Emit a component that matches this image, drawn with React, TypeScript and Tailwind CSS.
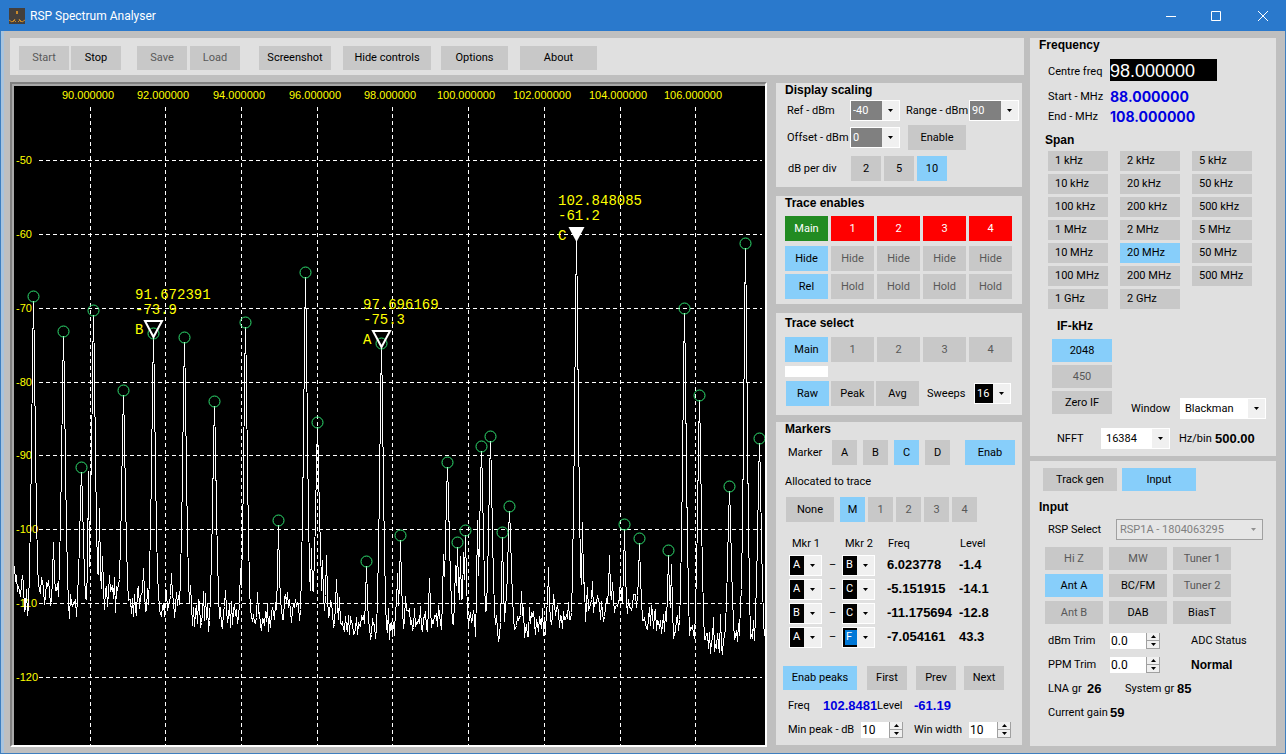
import React, { useState } from 'react';
import clsx from 'clsx';

const SPANS = [
    '1 kHz', '2 kHz', '5 kHz',
    '10 kHz', '20 kHz', '50 kHz',
    '100 kHz', '200 kHz', '500 kHz',
    '1 MHz', '2 MHz', '5 MHz',
    '10 MHz', '20 MHz', '50 MHz',
    '100 MHz', '200 MHz', '500 MHz',
    '1 GHz', '2 GHz',
];

const MARKER_ROWS = [
    { a: 'A', b: 'B', freq: '6.023778', level: '-1.4' },
    { a: 'A', b: 'C', freq: '-5.151915', level: '-14.1' },
    { a: 'B', b: 'C', freq: '-11.175694', level: '-12.8' },
    { a: 'A', b: 'F', freq: '-7.054161', level: '43.3' },
];

// Plot geometry, in plot pixels
const PLOT_W = 751;
const PLOT_H = 659;
const GRID_X = [76, 151, 227, 303, 378, 454, 530, 606, 681];
const GRID_Y = [74, 148, 222, 296, 369, 443, 517, 591];

// Detected peaks, circled on the plot
const PEAKS = [
    [19, 210], [49, 245], [67, 381], [79, 224], [109, 304], [139, 247], [170, 251], [200, 315],
    [231, 236], [264, 434], [291, 186], [303, 336], [352, 475], [367, 257], [386, 449], [433, 376],
    [443, 456], [451, 444], [467, 360], [476, 350], [488, 446], [495, 420], [610, 438], [625, 452],
    [654, 464], [670, 222], [685, 309], [715, 400], [731, 157], [745, 352],
];

const MINOR_PEAKS = [
    [0, 480], [39, 456], [74, 385], [76, 400], [85, 422], [88, 470], [95, 489], [104, 498], [129, 482], [157, 487], [176, 499],
    [226, 482], [273, 506], [288, 494], [297, 462], [300, 466], [303, 436], [306, 455], [308, 474],
    [312, 469], [322, 493], [383, 487], [415, 492], [429, 468], [441, 479], [446, 470], [449, 466],
    [463, 434], [507, 505], [534, 481], [568, 436], [583, 511], [595, 469], [598, 496], [606, 490],
    [657, 478], [729, 500], [743, 490],
];

// Mean noise level along the sweep
const FLOOR = [
    [0, 500], [16, 517], [31, 502], [46, 506], [58, 526], [71, 524], [81, 517], [96, 512], [121, 515],
    [166, 519], [191, 531], [216, 526], [226, 532], [246, 531], [271, 529], [291, 520], [321, 529],
    [346, 539], [371, 544], [385, 532], [406, 534], [451, 531], [476, 544], [506, 539], [546, 534],
    [576, 520], [626, 522], [646, 539], [666, 539], [686, 551], [711, 554], [726, 544], [741, 549],
    [752, 554],
];

// Share of a peak's height lost at each pixel away from its centre
const SKIRT = [0, 0.18, 0.5, 0.7, 0.88, 1];

const noise = (i: number) => {
    const n = Math.sin(i * 12.9898) * 43758.5453;
    return n - Math.floor(n);
};

const floorAt = (x: number) => {
    const next = Math.max(1, FLOOR.findIndex((p) => p[0] >= x));
    const [x0, y0] = FLOOR[next - 1];
    const [x1, y1] = FLOOR[next];
    return y0 + ((y1 - y0) * (x - x0)) / (x1 - x0);
};

const buildTrace = () => {
    const points: string[] = [];
    for (let x = 0; x < PLOT_W; x++) {
        const base = floorAt(x);
        let y = base + (noise(x) - 0.5) * 30 - (noise(x + 900) > 0.9 ? 14 : 0);
        for (const [px, py] of PEAKS.concat([[562, 149]])) {
            const d = Math.abs(x - px);
            const narrow = py > 430 ? 2 : 1;
            if (d * narrow < SKIRT.length) {
                y = Math.min(y, py + 5 + (base - py) * SKIRT[d * narrow]);
            }
        }
        for (const [px, py] of MINOR_PEAKS) {
            if (x === px) y = Math.min(y, py);
            if (Math.abs(x - px) === 1) y = Math.min(y, py + (base - py) * 0.7);
        }
        points.push(`${x + 0.5},${Math.round(y) + 0.5}`);
    }
    return points.join(' ');
};

const TRACE = buildTrace();

const FREQ_LABELS = [
    '90.000000', '92.000000', '94.000000', '96.000000', '98.000000',
    '100.000000', '102.000000', '104.000000', '106.000000',
];

const PLOT_MARKERS = [
    { name: 'B', x: 139, y: 235, textX: 121, freq: '91.672391', level: '-73.9', filled: false },
    { name: 'A', x: 367, y: 245, textX: 349, freq: '97.696169', level: '-75.3', filled: false },
    { name: 'C', x: 562, y: 141, textX: 544, freq: '102.848085', level: '-61.2', filled: true },
];

function SpectrumPlot() {
    return (
        <div className="min-w-0 flex-1 border-2 border-t-[#808080] border-l-[#808080] border-r-white border-b-white bg-black">
            <div className="h-full border-t-2 border-l-2 border-[#a8a8a8]">
                <svg
                    viewBox={`0 0 ${PLOT_W} ${PLOT_H}`}
                    preserveAspectRatio="xMinYMin meet"
                    className="block h-full w-full bg-black"
                >
                    <g stroke="#fff" strokeDasharray="4 3" shapeRendering="crispEdges">
                        {GRID_X.map((x) => (
                            <line key={x} x1={x + 0.5} x2={x + 0.5} y1="21" y2={PLOT_H} />
                        ))}
                        {GRID_Y.map((y) => (
                            <line key={y} x1="25" x2={PLOT_W - 3} y1={y + 0.5} y2={y + 0.5} />
                        ))}
                    </g>
                    <g fill="#ffff00" className="font-['Liberation_Sans',sans-serif] text-[11px]">
                        {FREQ_LABELS.map((label, i) => (
                            <text key={label} x={GRID_X[i] - 2} y="13" textAnchor="middle">{label}</text>
                        ))}
                        {GRID_Y.map((y, i) => (
                            <text key={y} x="2" y={y + 4}>{`-${50 + i * 10}`}</text>
                        ))}
                    </g>
                    <polyline points={TRACE} fill="none" stroke="#fff" shapeRendering="crispEdges" />
                    <g fill="none" stroke="#2ee070">
                        {PEAKS.map(([x, y]) => (
                            <circle key={x} cx={x + 0.5} cy={y + 0.5} r="5.5" />
                        ))}
                    </g>
                    {PLOT_MARKERS.map((m) => (
                        <g key={m.name}>
                            <path
                                d={m.filled
                                    ? `M${m.x - 7.5} ${m.y} h16 l-8 15 z`
                                    : `M${m.x - 8} ${m.y} h17 l-8.5 16 z`}
                                fill={m.filled ? '#fff' : 'none'}
                                stroke={m.filled ? 'none' : '#fff'}
                                strokeWidth="2"
                            />
                            <g fill="#ffff00" className="font-['Liberation_Mono',monospace] text-[14px]">
                                <text x={m.textX} y={m.y - 22}>{m.freq}</text>
                                <text x={m.textX} y={m.y - 7}>{m.level}</text>
                                <text x={m.textX} y={m.y + 13}>{m.name}</text>
                            </g>
                        </g>
                    ))}
                </svg>
            </div>
        </div>
    );
}

interface BtnProps {
    children: React.ReactNode;
    className?: string;
    on?: boolean;
    left?: boolean;
    disabled?: boolean;
    color?: string;
    onClick?: () => void;
}

function Btn({ children, className, on, left, disabled, color, onClick }: BtnProps) {
    return (
        <button
            type="button"
            disabled={disabled}
            onClick={onClick}
            className={clsx(
                'shrink-0',
                left ? 'pl-[7px] text-left' : 'text-center',
                color || (on ? 'bg-[#87cefa]' : 'bg-[#c8c8c8]'),
                disabled && 'text-[#585858]',
                className
            )}
        >
            {children}
        </button>
    );
}

interface ComboProps {
    id?: string;
    label?: string;
    value: string;
    className?: string;
    field?: string;
    disabled?: boolean;
}

function Combo({ id, label, value, className, field, disabled }: ComboProps) {
    return (
        <div className={clsx('relative h-[21px] shrink-0', className)}>
            <select
                id={id}
                aria-label={label}
                defaultValue={value}
                disabled={disabled}
                className={clsx('block h-full w-full appearance-none border opacity-100', field || 'border-white bg-white pl-1')}
            >
                <option>{value}</option>
            </select>
            <span
                className={clsx(
                    'pointer-events-none absolute inset-y-px right-px flex w-[17px] items-center justify-center',
                    disabled ? 'text-[#909090]' : 'bg-[#f0f0f0] text-black'
                )}
            >
                <svg width="5" height="3" viewBox="0 0 5 3" fill="currentColor"><path d="M0 0h5L2.5 3z" /></svg>
            </span>
        </div>
    );
}

function Spinner({ id, value, className }: { id: string; value: string; className: string }) {
    return (
        <div className={clsx('flex h-4 shrink-0 bg-white', className)}>
            <input id={id} type="text" defaultValue={value} className="w-full min-w-0 flex-1 bg-white pl-px text-xs leading-4 outline-none" />
            <div className="flex w-[14px] flex-col bg-[#f0f0f0]">
                <button type="button" aria-label="Up" className="flex flex-1 items-center justify-center border border-t-0 border-[#a0a0a0]">
                    <svg width="5" height="3" viewBox="0 0 5 3"><path d="M0 3h5L2.5 0z" /></svg>
                </button>
                <button type="button" aria-label="Down" className="flex flex-1 items-center justify-center border border-t-0 border-[#a0a0a0]">
                    <svg width="5" height="3" viewBox="0 0 5 3"><path d="M0 0h5L2.5 3z" /></svg>
                </button>
            </div>
        </div>
    );
}

function Panel({ children, className }: { children: React.ReactNode; className?: string }) {
    return <section className={clsx('bg-[#e0e0e0]', className)}>{children}</section>;
}

function Heading({ children, className }: { children: React.ReactNode; className?: string }) {
    return <h2 className={clsx("font-['Liberation_Sans',sans-serif] text-xs leading-[14px] font-bold", className)}>{children}</h2>;
}

function Value({ children, className }: { children: React.ReactNode; className?: string }) {
    return <output className={clsx("font-['Liberation_Sans',sans-serif] text-[13px] font-bold", className)}>{children}</output>;
}

function TitleBar() {
    return (
        <header className="flex h-[31px] shrink-0 items-center bg-[#2a79cc] pl-2 text-white">
            <svg width="18" height="16" viewBox="0 0 18 16">
                <rect x="1" width="16" height="16" fill="#443f3c" />
                <path d="M9 3v3" stroke="#c98a2b" strokeWidth="2" />
                <path d="M1 12l3 2 2-2 2 2M17 12l-3 2-2-2-2 2M7 11l-2 3M11 11l2 3" fill="none" stroke="#c98a2b" />
            </svg>
            <h1 className="ml-1 flex-1 text-xs">RSP Spectrum Analyser</h1>
            <button type="button" aria-label="Minimize" className="flex h-full w-[45px] items-center justify-center">
                <svg width="10" height="10" stroke="#fff"><path d="M0 5.5h10" /></svg>
            </button>
            <button type="button" aria-label="Maximize" className="flex h-full w-[46px] items-center justify-center">
                <svg width="10" height="10" stroke="#fff" fill="none"><path d="M.5.5h9v9h-9z" /></svg>
            </button>
            <button type="button" aria-label="Close" className="flex h-full w-[47px] items-center justify-center">
                <svg width="10" height="10" stroke="#fff"><path d="M0 0l10 10M10 0L0 10" /></svg>
            </button>
        </header>
    );
}

function Toolbar() {
    return (
        <Panel className="flex h-[37px] shrink-0 items-center pt-[3px] pl-[9px]">
            <Btn className="h-6 w-[50px]" disabled>Start</Btn>
            <Btn className="ml-[2px] h-6 w-[50px]">Stop</Btn>
            <Btn className="ml-4 h-6 w-[50px]" disabled>Save</Btn>
            <Btn className="ml-[3px] h-6 w-[50px]" disabled>Load</Btn>
            <Btn className="ml-[19px] h-6 w-[72px]">Screenshot</Btn>
            <Btn className="ml-3 h-6 w-[88px]">Hide controls</Btn>
            <Btn className="ml-[10px] h-6 w-[67px]">Options</Btn>
            <Btn className="ml-3 h-6 w-[77px]">About</Btn>
        </Panel>
    );
}

function DisplayScaling() {
    const [div, setDiv] = useState('10');
    const gray = 'border-white bg-[#808080] text-white pl-[2px]';

    return (
        <Panel className="h-[104px] pl-[9px]">
            <Heading>Display scaling</Heading>
            <div className="mt-[3px] flex items-center">
                <label htmlFor="ref" className="w-[65px] pl-[2px]">Ref - dBm</label>
                <Combo id="ref" value="-40" className="w-[50px]" field={gray} />
                <label htmlFor="range" className="w-[69px] pl-[6px]">Range - dBm</label>
                <Combo id="range" value="90" className="w-[50px]" field={gray} />
            </div>
            <div className="mt-1 flex items-center">
                <label htmlFor="offset" className="w-[65px] pl-[2px]">Offset - dBm</label>
                <Combo id="offset" value="0" className="w-[50px]" field={gray} />
                <Btn className="ml-2 h-[25px] w-[58px]">Enable</Btn>
            </div>
            <div className="mt-[6px] flex items-center gap-[3px]">
                <span className="w-[63px] pl-[3px]">dB per div</span>
                {['2', '5', '10'].map((d) => (
                    <Btn key={d} className="h-[25px] w-[30px]" on={div === d} onClick={() => setDiv(d)}>{d}</Btn>
                ))}
            </div>
        </Panel>
    );
}

function TraceEnables() {
    const cell = 'h-[25px] w-[43px]';

    return (
        <Panel className="mt-[9px] h-[108px] pl-[9px]">
            <Heading>Trace enables</Heading>
            <div className="mt-[6px] flex gap-[3px]">
                <Btn className={clsx(cell, 'text-white')} color="bg-[#228b22]">Main</Btn>
                {['1', '2', '3', '4'].map((n) => (
                    <Btn key={n} className={clsx(cell, 'text-white')} color="bg-[#ff0000]">{n}</Btn>
                ))}
            </div>
            <div className="mt-[5px] flex gap-[3px]">
                <Btn className={cell} on>Hide</Btn>
                {['1', '2', '3', '4'].map((n) => <Btn key={n} className={cell} disabled>Hide</Btn>)}
            </div>
            <div className="mt-[3px] flex gap-[3px]">
                <Btn className={cell} on>Rel</Btn>
                {['1', '2', '3', '4'].map((n) => <Btn key={n} className={cell} disabled>Hold</Btn>)}
            </div>
        </Panel>
    );
}

function TraceSelect() {
    const [mode, setMode] = useState('Raw');

    return (
        <Panel className="mt-[9px] h-[102px] pt-[3px] pl-[9px]">
            <Heading>Trace select</Heading>
            <div className="mt-[7px] flex gap-[3px]">
                <Btn className="h-[25px] w-[43px]" on>Main</Btn>
                {['1', '2', '3', '4'].map((n) => <Btn key={n} className="h-[25px] w-[43px]" disabled>{n}</Btn>)}
            </div>
            <div className="mt-1 h-[11px] w-[43px] bg-white" />
            <div className="mt-1 flex items-center gap-[2px] pl-px">
                {['Raw', 'Peak', 'Avg'].map((m) => (
                    <Btn key={m} className="h-[25px] w-[43px]" on={mode === m} onClick={() => setMode(m)}>{m}</Btn>
                ))}
                <label htmlFor="sweeps" className="ml-[6px] w-[45px]">Sweeps</label>
                <Combo id="sweeps" value="16" className="w-[37px]" field="border-white bg-black text-white pl-[2px]" />
            </div>
        </Panel>
    );
}

function Markers() {
    const [marker, setMarker] = useState('C');

    return (
        <Panel className="mt-[7px] flex-1 pl-[7px]">
            <Heading className="pl-[2px]">Markers</Heading>
            <div className="mt-1 flex items-center gap-[6px] pl-[5px]">
                <span className="w-[38px]">Marker</span>
                {['A', 'B', 'C', 'D'].map((m) => (
                    <Btn key={m} className="size-[25px]" on={marker === m} onClick={() => setMarker(m)}>{m}</Btn>
                ))}
                <Btn className="ml-[9px] h-[25px] w-[50px]" on>Enab</Btn>
            </div>
            <p className="mt-[9px] pl-[2px]">Allocated to trace</p>
            <div className="mt-[7px] flex gap-[3px] pl-[3px]">
                <Btn className="mr-[3px] h-[25px] w-[48px]">None</Btn>
                <Btn className="size-[25px]" on>M</Btn>
                {['1', '2', '3', '4'].map((n) => <Btn key={n} className="size-[25px]" disabled>{n}</Btn>)}
            </div>
            <table className="mt-[13px] border-collapse text-left">
                <thead>
                    <tr className="h-[18px]">
                        <th className="w-[59px] pl-[9px] font-normal">Mkr 1</th>
                        <th className="w-[45px] pl-[3px] font-normal">Mkr 2</th>
                        <th className="w-[72px] pl-[1px] font-normal">Freq</th>
                        <th className="pl-[1px] font-normal">Level</th>
                    </tr>
                </thead>
                <tbody>
                    {MARKER_ROWS.map((row, i) => (
                        <tr key={i} className="h-6">
                            <td className="py-0 pl-[6px]">
                                <div className="flex items-center">
                                    <Combo label="Mkr 1" value={row.a} className="w-[33px]" field="border-white bg-black text-white pl-[3px]" />
                                    <span className="ml-[7px]">–</span>
                                </div>
                            </td>
                            <td className="p-0">
                                <Combo
                                    label="Mkr 2"
                                    value={row.b}
                                    className="w-[33px]"
                                    field={row.b === 'F'
                                        ? 'border-white bg-[#0078d7] text-white pl-[3px] shadow-[inset_0_0_0_2px_#000]'
                                        : 'border-white bg-black text-white pl-[3px]'}
                                />
                            </td>
                            <td className="p-0"><Value>{row.freq}</Value></td>
                            <td className="p-0"><Value>{row.level}</Value></td>
                        </tr>
                    ))}
                </tbody>
            </table>
            <div className="mt-[17px] flex">
                <Btn className="h-6 w-[74px]" on>Enab peaks</Btn>
                <Btn className="ml-[10px] h-6 w-10">First</Btn>
                <Btn className="ml-[9px] h-6 w-10">Prev</Btn>
                <Btn className="ml-2 h-6 w-10">Next</Btn>
            </div>
            <div className="mt-2 flex items-center pl-[5px]">
                <span className="w-[35px]">Freq</span>
                <Value className="w-[54px] text-[#0000e0]">102.8481</Value>
                <span className="w-[37px]">Level</span>
                <Value className="text-[#0000e0]">-61.19</Value>
            </div>
            <div className="mt-2 flex items-center pl-[5px]">
                <label htmlFor="min-peak" className="w-[73px]">Min peak - dB</label>
                <Spinner id="min-peak" value="10" className="w-[42px]" />
                <label htmlFor="win-width" className="ml-[11px] w-[55px]">Win width</label>
                <Spinner id="win-width" value="10" className="w-[42px]" />
            </div>
        </Panel>
    );
}

function FrequencyPanel() {
    const [span, setSpan] = useState('20 MHz');
    const edge = "font-['Inter',sans-serif] text-sm font-bold text-[#0000e0]";

    return (
        <Panel className="h-[418px] pl-[9px]">
            <Heading>Frequency</Heading>
            <div className="mt-[7px] flex items-center pl-[9px]">
                <label htmlFor="centre" className="w-[62px] pt-[3px]">Centre freq</label>
                <input
                    id="centre"
                    type="text"
                    defaultValue="98.000000"
                    className="h-[22px] w-[107px] bg-black pt-[2px] font-['Liberation_Sans',sans-serif] text-lg text-white outline-none"
                />
            </div>
            <div className="mt-[6px] flex h-5 items-center pl-[9px]">
                <span className="w-[62px]">Start - MHz</span>
                <output className={edge}>88.000000</output>
            </div>
            <div className="flex h-5 items-center pl-[9px]">
                <span className="w-[62px]">End - MHz</span>
                <output className={edge}>108.000000</output>
            </div>
            <Heading className="mt-[6px] pl-[6px]">Span</Heading>
            <div className="mt-1 grid grid-cols-[60px_60px_60px] gap-x-3 gap-y-[3px] pl-[9px]">
                {SPANS.map((s) => (
                    <Btn key={s} className="h-5" left on={span === s} onClick={() => setSpan(s)}>{s}</Btn>
                ))}
            </div>
            <Heading className="mt-[10px] pl-[18px]">IF-kHz</Heading>
            <div className="mt-[6px] flex items-end pl-[13px]">
                <div className="flex w-[60px] flex-col gap-[3px]">
                    <Btn className="h-[23px]" on>2048</Btn>
                    <Btn className="h-[23px]" disabled>450</Btn>
                    <Btn className="h-[23px]">Zero IF</Btn>
                </div>
                <div className="-mb-[5px] flex items-center pl-[19px]">
                    <label htmlFor="window" className="w-[49px]">Window</label>
                    <Combo id="window" value="Blackman" className="w-[86px]" />
                </div>
            </div>
            <div className="mt-[14px] flex items-center pl-[18px]">
                <label htmlFor="nfft" className="w-[44px]">NFFT</label>
                <Combo id="nfft" value="16384" className="w-[69px]" />
                <span className="ml-[9px] w-[36px]">Hz/bin</span>
                <Value>500.00</Value>
            </div>
        </Panel>
    );
}

function InputPanel() {
    return (
        <Panel className="mt-[5px] flex-1 pt-[7px] pl-[9px]">
            <div className="flex gap-[5px] pl-1">
                <Btn className="h-[23px] w-[74px]">Track gen</Btn>
                <Btn className="h-[23px] w-[74px]" on>Input</Btn>
            </div>
            <Heading className="mt-[9px]">Input</Heading>
            <div className="mt-[5px] flex items-center pl-[9px]">
                <label htmlFor="rsp" className="w-[68px]">RSP Select</label>
                <Combo
                    id="rsp"
                    value="RSP1A - 1804063295"
                    className="w-[147px]"
                    field="border-[#a0a0a0] bg-[#e6e6e6] text-[#808080] pl-[3px]"
                    disabled
                />
            </div>
            <div className="mt-[7px] grid grid-cols-[58px_58px_58px] gap-x-[6px] gap-y-1 pl-[6px]">
                <Btn className="h-[23px]" disabled>Hi Z</Btn>
                <Btn className="h-[23px]" disabled>MW</Btn>
                <Btn className="h-[23px]" disabled>Tuner 1</Btn>
                <Btn className="h-[23px]" on>Ant A</Btn>
                <Btn className="h-[23px]">BC/FM</Btn>
                <Btn className="h-[23px]" disabled>Tuner 2</Btn>
                <Btn className="h-[23px]" disabled>Ant B</Btn>
                <Btn className="h-[23px]">DAB</Btn>
                <Btn className="h-[23px]">BiasT</Btn>
            </div>
            <div className="mt-[5px] flex h-6 items-center pl-[9px]">
                <label htmlFor="dbm-trim" className="w-[62px]">dBm Trim</label>
                <Spinner id="dbm-trim" value="0.0" className="w-[50px]" />
                <span className="ml-[31px]">ADC Status</span>
            </div>
            <div className="flex h-6 items-center pl-[9px]">
                <label htmlFor="ppm-trim" className="w-[62px]">PPM Trim</label>
                <Spinner id="ppm-trim" value="0.0" className="w-[50px]" />
                <output className="ml-[31px] font-['Liberation_Sans',sans-serif] text-xs font-bold">Normal</output>
            </div>
            <div className="flex h-6 items-center pl-[9px]">
                <span className="w-[39px]">LNA gr</span>
                <Value className="w-[38px]">26</Value>
                <span className="w-[52px]">System gr</span>
                <Value>85</Value>
            </div>
            <div className="flex h-6 items-center pl-[9px]">
                <span className="w-[62px]">Current gain</span>
                <Value>59</Value>
            </div>
        </Panel>
    );
}

export default function App() {
    return (
        <div className="flex min-h-screen flex-col border-b border-[#3f7fbf] bg-[#bfbfbf] font-[Roboto,'Liberation_Sans',sans-serif] text-[11px] leading-4 whitespace-nowrap text-black">
            <TitleBar />
            <main className="flex flex-1 gap-[6px] border-r border-l border-r-[#3f7fbf] border-l-[#3f7fbf] pt-[7px] pr-[9px] pb-[6px] pl-[9px] shadow-[inset_3px_0_0_#a9c4de]">
                <div className="flex min-w-0 flex-1 flex-col">
                    <Toolbar />
                    <div className="mt-[7px] flex flex-1 gap-[9px] pr-[2px]">
                        <SpectrumPlot />
                        <div className="flex w-[246px] shrink-0 flex-col pt-px pb-[2px]">
                            <DisplayScaling />
                            <TraceEnables />
                            <TraceSelect />
                            <Markers />
                        </div>
                    </div>
                </div>
                <div className="flex w-[246px] shrink-0 flex-col pb-px">
                    <FrequencyPanel />
                    <InputPanel />
                </div>
            </main>
        </div>
    );
}
